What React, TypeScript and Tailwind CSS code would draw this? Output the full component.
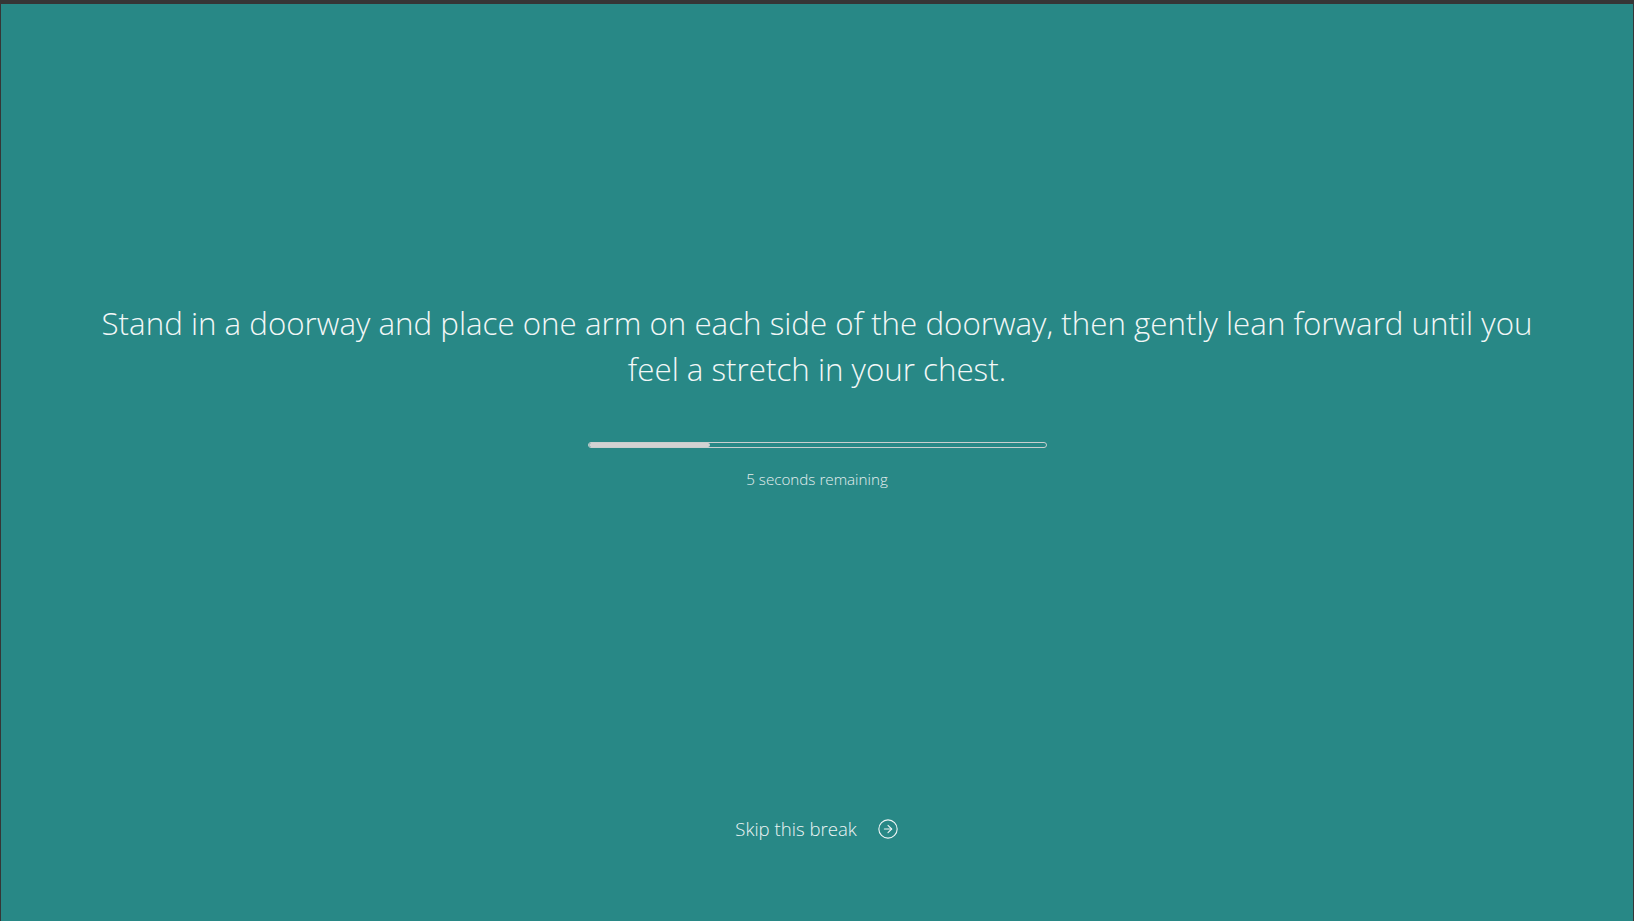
import { CircleArrowRight } from "lucide-react";

const font = { fontFamily: '"Open Sans", "Noto Sans", sans-serif' };

export default function App() {
  const progress = 26.5;

  return (
    <div className="flex h-screen w-full flex-col bg-[#363636] pt-[4px] pl-px pr-px" style={font}>
      <main className="flex flex-1 flex-col items-center bg-[#288886] px-[90px] pt-[296px] pb-[78px] text-white">
        <p className="text-center text-[31.3px] font-light leading-[46px] text-[#f2f7f7]">
          Stand in a doorway and place one arm on each side of the doorway, then gently lean forward until you feel a
          stretch in your chest.
        </p>

        <div className="mt-[50px] h-[6px] w-[459px] overflow-hidden rounded-full border border-[#c9cfcf]">
          <div className="h-full rounded-full bg-[#d2d2d2]" style={{ width: `${progress}%` }} />
        </div>

        <p className="mt-[21px] text-[15.2px] font-light leading-5 text-[#e4eeee]">5 seconds remaining</p>

        <button className="mt-auto flex items-center gap-[20px] text-[18.6px] font-light leading-7 text-[#eef5f5]">
          Skip this break
          <CircleArrowRight size={22} strokeWidth={1.2} />
        </button>
      </main>
    </div>
  );
}
